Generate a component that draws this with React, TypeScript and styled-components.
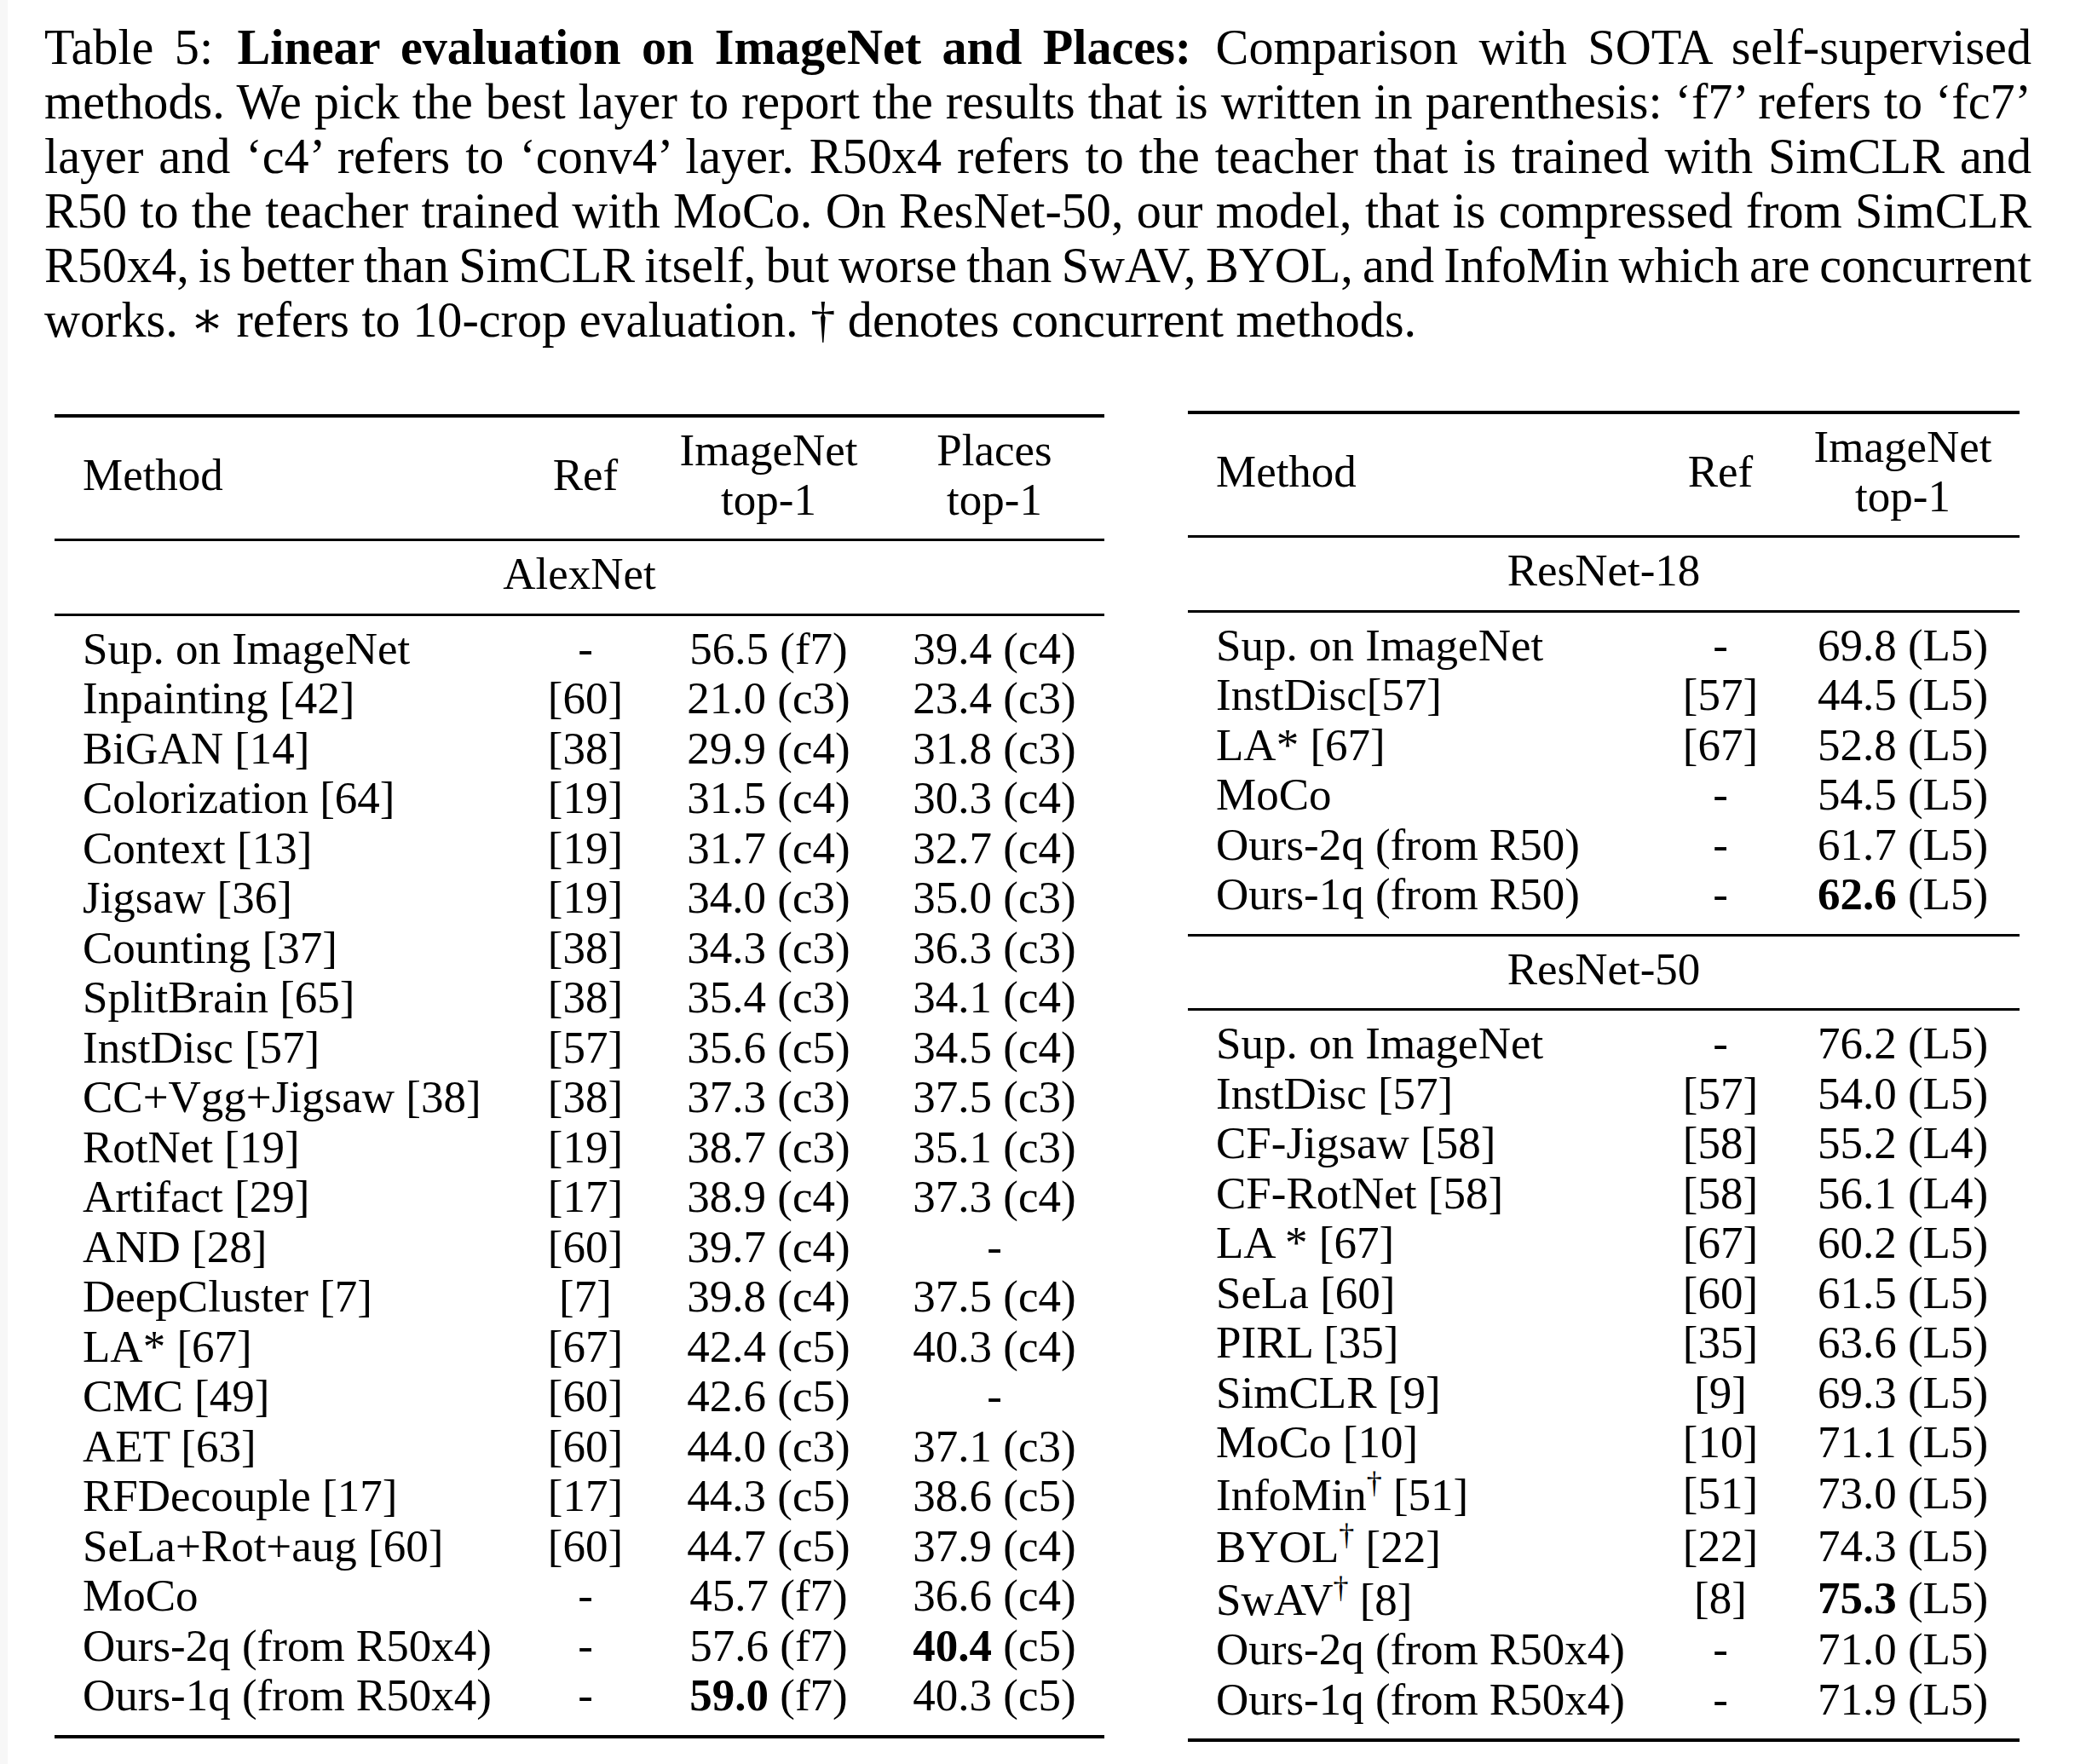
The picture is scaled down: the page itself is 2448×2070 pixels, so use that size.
import React from "react"
import styled, { createGlobalStyle } from "styled-components"

const GlobalStyle = createGlobalStyle`
  html, body {
    margin: 0;
    padding: 0;
    background: #fff;
  }
  body {
    font-family: "Liberation Serif", "Times New Roman", "DejaVu Serif", serif;
    color: #000;
  }
`

const Page = styled.div`
  width: 2448px;
  min-height: 2070px;
  box-sizing: border-box;
  padding: 24px 0 0 52px;
  box-shadow: inset 9px 0 0 #f7f7f7;
`

const Caption = styled.div`
  width: 2332px;
  font-size: 58.2px;
  line-height: 64px;
`

// each line is set on its own, stretched to the full width like the typeset original
const CaptionLine = styled.div<{ $last?: boolean }>`
  white-space: nowrap;
  text-align: ${(p) => (p.$last ? "left" : "justify")};
  text-align-last: ${(p) => (p.$last ? "left" : "justify")};
  word-spacing: ${(p) => (p.$last ? "0" : "-6px")};
`

const CaptionTitle = styled.b`
  font-weight: 700;
  margin: 0 4px;
`

const Tables = styled.div`
  display: flex;
  justify-content: space-between;
  align-items: center;
  width: 2332px;
  box-sizing: border-box;
  padding: 0 14px 0 12px;
  margin-top: 74px;
`

const Table = styled.table<{ $w: number }>`
  width: ${(p) => p.$w}px;
  table-layout: fixed;
  border-collapse: separate;
  border-spacing: 0;
  font-size: 53px;
  line-height: 58.5px;
  border-top: 4px solid #000;
  border-bottom: 4px solid #000;
`

const Col = styled.col<{ $w: number }>`
  width: ${(p) => p.$w}px;
`

const Head = styled.thead`
  & td {
    line-height: 58px;
    padding-top: 9px;
    padding-bottom: 17px;
  }
`

const Section = styled.tbody`
  & > tr:first-child > td {
    border-top: 3px solid #000;
    padding-top: 9px;
  }
  & > tr:last-child > td {
    padding-bottom: 17px;
  }
`

const Cell = styled.td<{ $method?: boolean }>`
  padding: 0;
  padding-left: ${(p) => (p.$method ? "33px" : "0")};
  text-align: ${(p) => (p.$method ? "left" : "center")};
  white-space: nowrap;
  vertical-align: middle;
`

const Best = styled.b`
  font-weight: 700;
`

const Dagger = styled.sup`
  font-size: 36px;
  line-height: 1;
  vertical-align: 20px;
`

type Row = {
  name: string
  cite?: string
  dagger?: boolean
  ref: string
  scores: React.ReactNode[]
}

const sc = (num: string, layer: string, best = false) => (
  <>
    {best ? <Best>{num}</Best> : num} ({layer})
  </>
)

const alexNet: Row[] = [
  { name: "Sup. on ImageNet", ref: "-", scores: [sc("56.5", "f7"), sc("39.4", "c4")] },
  { name: "Inpainting", cite: "[42]", ref: "[60]", scores: [sc("21.0", "c3"), sc("23.4", "c3")] },
  { name: "BiGAN", cite: "[14]", ref: "[38]", scores: [sc("29.9", "c4"), sc("31.8", "c3")] },
  { name: "Colorization", cite: "[64]", ref: "[19]", scores: [sc("31.5", "c4"), sc("30.3", "c4")] },
  { name: "Context", cite: "[13]", ref: "[19]", scores: [sc("31.7", "c4"), sc("32.7", "c4")] },
  { name: "Jigsaw", cite: "[36]", ref: "[19]", scores: [sc("34.0", "c3"), sc("35.0", "c3")] },
  { name: "Counting", cite: "[37]", ref: "[38]", scores: [sc("34.3", "c3"), sc("36.3", "c3")] },
  { name: "SplitBrain", cite: "[65]", ref: "[38]", scores: [sc("35.4", "c3"), sc("34.1", "c4")] },
  { name: "InstDisc", cite: "[57]", ref: "[57]", scores: [sc("35.6", "c5"), sc("34.5", "c4")] },
  { name: "CC+Vgg+Jigsaw", cite: "[38]", ref: "[38]", scores: [sc("37.3", "c3"), sc("37.5", "c3")] },
  { name: "RotNet", cite: "[19]", ref: "[19]", scores: [sc("38.7", "c3"), sc("35.1", "c3")] },
  { name: "Artifact", cite: "[29]", ref: "[17]", scores: [sc("38.9", "c4"), sc("37.3", "c4")] },
  { name: "AND", cite: "[28]", ref: "[60]", scores: [sc("39.7", "c4"), "-"] },
  { name: "DeepCluster", cite: "[7]", ref: "[7]", scores: [sc("39.8", "c4"), sc("37.5", "c4")] },
  { name: "LA*", cite: "[67]", ref: "[67]", scores: [sc("42.4", "c5"), sc("40.3", "c4")] },
  { name: "CMC", cite: "[49]", ref: "[60]", scores: [sc("42.6", "c5"), "-"] },
  { name: "AET", cite: "[63]", ref: "[60]", scores: [sc("44.0", "c3"), sc("37.1", "c3")] },
  { name: "RFDecouple", cite: "[17]", ref: "[17]", scores: [sc("44.3", "c5"), sc("38.6", "c5")] },
  { name: "SeLa+Rot+aug", cite: "[60]", ref: "[60]", scores: [sc("44.7", "c5"), sc("37.9", "c4")] },
  { name: "MoCo", ref: "-", scores: [sc("45.7", "f7"), sc("36.6", "c4")] },
  { name: "Ours-2q (from R50x4)", ref: "-", scores: [sc("57.6", "f7"), sc("40.4", "c5", true)] },
  { name: "Ours-1q (from R50x4)", ref: "-", scores: [sc("59.0", "f7", true), sc("40.3", "c5")] },
]

const resNet18: Row[] = [
  { name: "Sup. on ImageNet", ref: "-", scores: [sc("69.8", "L5")] },
  { name: "InstDisc[57]", ref: "[57]", scores: [sc("44.5", "L5")] },
  { name: "LA*", cite: "[67]", ref: "[67]", scores: [sc("52.8", "L5")] },
  { name: "MoCo", ref: "-", scores: [sc("54.5", "L5")] },
  { name: "Ours-2q (from R50)", ref: "-", scores: [sc("61.7", "L5")] },
  { name: "Ours-1q (from R50)", ref: "-", scores: [sc("62.6", "L5", true)] },
]

const resNet50: Row[] = [
  { name: "Sup. on ImageNet", ref: "-", scores: [sc("76.2", "L5")] },
  { name: "InstDisc", cite: "[57]", ref: "[57]", scores: [sc("54.0", "L5")] },
  { name: "CF-Jigsaw", cite: "[58]", ref: "[58]", scores: [sc("55.2", "L4")] },
  { name: "CF-RotNet", cite: "[58]", ref: "[58]", scores: [sc("56.1", "L4")] },
  { name: "LA *", cite: "[67]", ref: "[67]", scores: [sc("60.2", "L5")] },
  { name: "SeLa", cite: "[60]", ref: "[60]", scores: [sc("61.5", "L5")] },
  { name: "PIRL", cite: "[35]", ref: "[35]", scores: [sc("63.6", "L5")] },
  { name: "SimCLR", cite: "[9]", ref: "[9]", scores: [sc("69.3", "L5")] },
  { name: "MoCo", cite: "[10]", ref: "[10]", scores: [sc("71.1", "L5")] },
  { name: "InfoMin", dagger: true, cite: "[51]", ref: "[51]", scores: [sc("73.0", "L5")] },
  { name: "BYOL", dagger: true, cite: "[22]", ref: "[22]", scores: [sc("74.3", "L5")] },
  { name: "SwAV", dagger: true, cite: "[8]", ref: "[8]", scores: [sc("75.3", "L5", true)] },
  { name: "Ours-2q (from R50x4)", ref: "-", scores: [sc("71.0", "L5")] },
  { name: "Ours-1q (from R50x4)", ref: "-", scores: [sc("71.9", "L5")] },
]

const DataRow = ({ row }: { row: Row }) => (
  <tr>
    <Cell $method>
      {row.name}
      {row.dagger && <Dagger>†</Dagger>}
      {row.cite && <> {row.cite}</>}
    </Cell>
    <Cell>{row.ref}</Cell>
    {row.scores.map((s, i) => (
      <Cell key={i}>{s}</Cell>
    ))}
  </tr>
)

const Group = ({ label, rows, span }: { label: string; rows: Row[]; span: number }) => (
  <>
    <Section>
      <tr>
        <Cell colSpan={span}>{label}</Cell>
      </tr>
    </Section>
    <Section>
      {rows.map((r, i) => (
        <DataRow key={i} row={r} />
      ))}
    </Section>
  </>
)

const HeaderRow = ({ columns }: { columns: React.ReactNode[] }) => (
  <Head>
    <tr>
      <Cell $method>Method</Cell>
      <Cell>Ref</Cell>
      {columns.map((c, i) => (
        <Cell key={i}>{c}</Cell>
      ))}
    </tr>
  </Head>
)

export default function App() {
  return (
    <>
      <GlobalStyle />
      <Page>
        <Caption>
          <CaptionLine>
            Table 5: <CaptionTitle>Linear evaluation on ImageNet and Places:</CaptionTitle> Comparison
            with SOTA self-supervised
          </CaptionLine>
          <CaptionLine>
            methods. We pick the best layer to report the results that is written in parenthesis: ‘f7’
            refers to ‘fc7’
          </CaptionLine>
          <CaptionLine>
            layer and ‘c4’ refers to ‘conv4’ layer. R50x4 refers to the teacher that is trained with
            SimCLR and
          </CaptionLine>
          <CaptionLine>
            R50 to the teacher trained with MoCo. On ResNet-50, our model, that is compressed from SimCLR
          </CaptionLine>
          <CaptionLine>
            R50x4, is better than SimCLR itself, but worse than SwAV, BYOL, and InfoMin which are
            concurrent
          </CaptionLine>
          <CaptionLine $last>
            works. ∗ refers to 10-crop evaluation. † denotes concurrent methods.
          </CaptionLine>
        </Caption>

        <Tables>
          <Table $w={1232}>
            <colgroup>
              <Col $w={544} />
              <Col $w={158} />
              <Col $w={272} />
              <Col $w={258} />
            </colgroup>
            <HeaderRow
              columns={[
                <>
                  ImageNet
                  <br />
                  top-1
                </>,
                <>
                  Places
                  <br />
                  top-1
                </>,
              ]}
            />
            <Group label="AlexNet" rows={alexNet} span={4} />
          </Table>

          <Table $w={976}>
            <colgroup>
              <Col $w={548} />
              <Col $w={154} />
              <Col $w={274} />
            </colgroup>
            <HeaderRow
              columns={[
                <>
                  ImageNet
                  <br />
                  top-1
                </>,
              ]}
            />
            <Group label="ResNet-18" rows={resNet18} span={3} />
            <Group label="ResNet-50" rows={resNet50} span={3} />
          </Table>
        </Tables>
      </Page>
    </>
  )
}
